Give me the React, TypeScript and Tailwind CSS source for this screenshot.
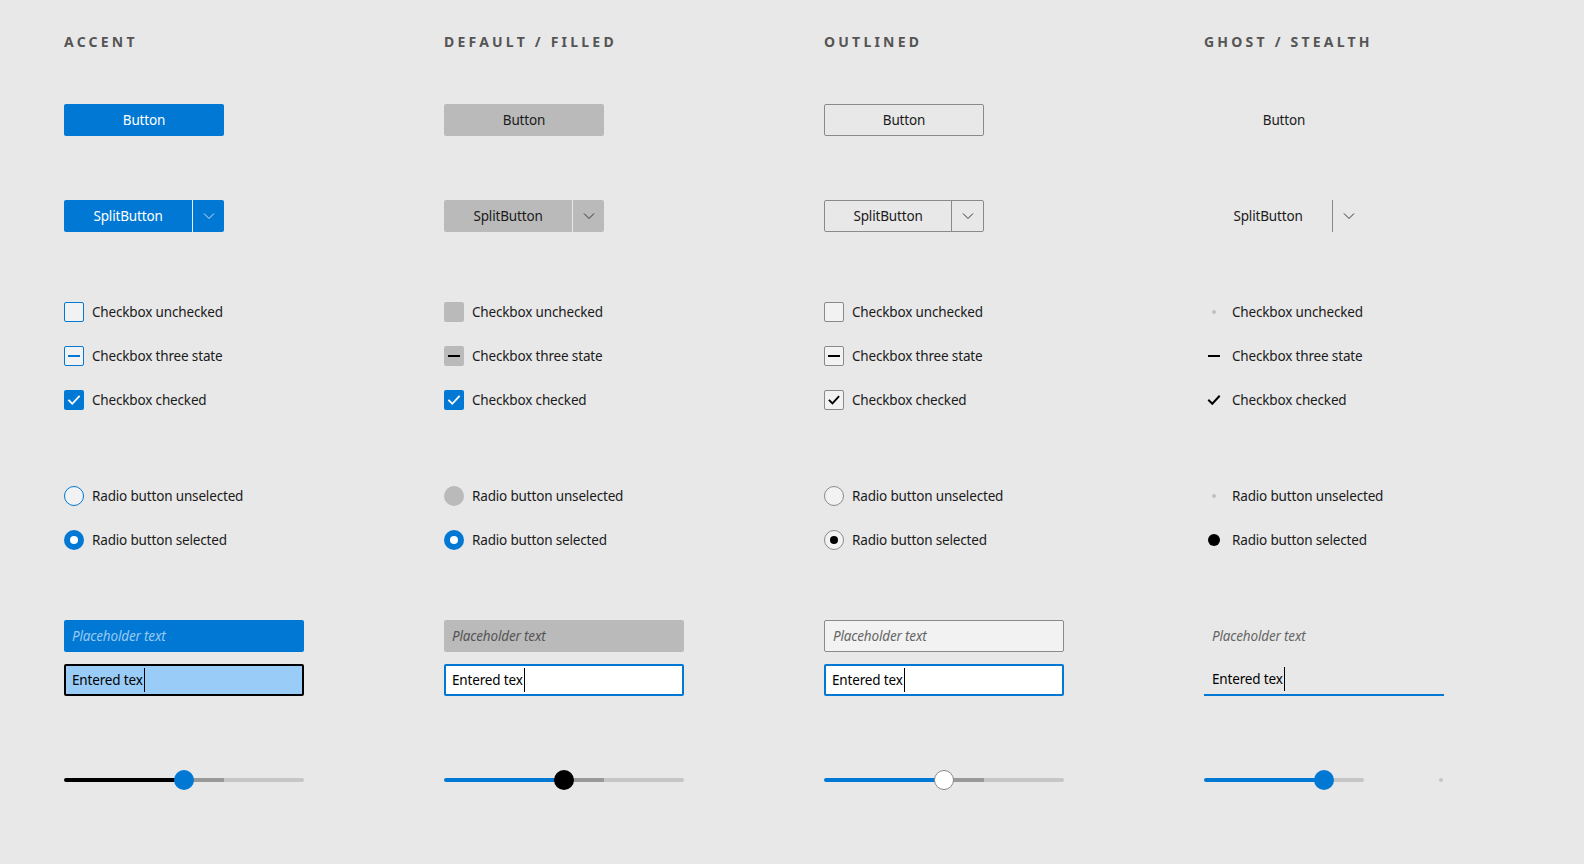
import React from "react";

type Variant = "accent" | "default" | "outlined" | "ghost";

const FONT = { fontFamily: '"Noto Sans", "Open Sans", sans-serif' } as const;

function Chevron({ color }: { color: string }) {
  return (
    <svg width="12" height="8" viewBox="0 0 12 8" fill="none">
      <path d="M1 1.5 L6 6.5 L11 1.5" stroke={color} strokeWidth="1" />
    </svg>
  );
}

function Check({ color, w = 1.8 }: { color: string; w?: number }) {
  return (
    <svg width="20" height="20" viewBox="0 0 20 20" fill="none">
      <path d="M5 10.5 L8.3 13.8 L15 6.5" stroke={color} strokeWidth={w} strokeLinecap="square" />
    </svg>
  );
}

const TXT = "text-[13.5px] tracking-[-0.012em]";

function PlainButton({ v }: { v: Variant }) {
  const cls = {
    accent: "bg-[#0078d4] text-white",
    default: "bg-[#bababa] text-[#1a1a1a]",
    outlined: "border border-[#8a8a8a] text-[#1a1a1a]",
    ghost: "text-[#1a1a1a]",
  }[v];
  return (
    <div className={`w-[160px] h-8 rounded-[2px] flex items-center justify-center ${TXT} ${cls}`}>
      Button
    </div>
  );
}

function SplitButton({ v }: { v: Variant }) {
  const wrap = {
    accent: "bg-[#0078d4] text-white",
    default: "bg-[#bababa] text-[#1a1a1a]",
    outlined: "border border-[#8a8a8a] text-[#1a1a1a]",
    ghost: "text-[#1a1a1a]",
  }[v];
  const divider = {
    accent: "bg-[#e6eef7]",
    default: "bg-[#e8e8e8]",
    outlined: "bg-[#8a8a8a]",
    ghost: "bg-[#8a8a8a]",
  }[v];
  const chev = v === "accent" ? "#cfe4f7" : "#333333";
  return (
    <div className={`w-[160px] h-8 rounded-[2px] flex items-stretch ${TXT} ${wrap}`}>
      <div className="flex-1 flex items-center justify-center">SplitButton</div>
      <div className={`w-px ${divider}`} />
      <div className="w-[31px] flex items-center justify-center">
        <Chevron color={chev} />
      </div>
    </div>
  );
}

function CheckBox({ v, state }: { v: Variant; state: "off" | "mixed" | "on" }) {
  if (v === "ghost") {
    return (
      <div className="w-5 h-5 flex items-center justify-center">
        {state === "off" && <div className="w-[4px] h-[4px] rounded-full bg-[#c0c0c0]" />}
        {state === "mixed" && <div className="w-3 h-[2px] bg-black" />}
        {state === "on" && <Check color="#000" w={2} />}
      </div>
    );
  }
  let box = "";
  let inner: React.ReactNode = null;
  if (v === "accent") {
    if (state === "on") {
      box = "bg-[#0078d4]";
      inner = <Check color="#fff" />;
    } else {
      box = "border border-[#0078d4] bg-[#f2f2f2]";
      if (state === "mixed") inner = <div className="w-3 h-[2px] bg-[#0078d4]" />;
    }
  } else if (v === "default") {
    if (state === "on") {
      box = "bg-[#0078d4]";
      inner = <Check color="#fff" />;
    } else {
      box = "bg-[#bababa]";
      if (state === "mixed") inner = <div className="w-3 h-[2px] bg-black" />;
    }
  } else {
    box = "border border-[#8a8a8a] bg-[#f2f2f2]";
    if (state === "mixed") inner = <div className="w-3 h-[2px] bg-black" />;
    if (state === "on") inner = <Check color="#000" w={2} />;
  }
  return (
    <div className={`w-5 h-5 rounded-[2px] flex items-center justify-center ${box}`}>{inner}</div>
  );
}

function Radio({ v, on }: { v: Variant; on: boolean }) {
  if (v === "ghost") {
    return (
      <div className="w-5 h-5 flex items-center justify-center">
        {on ? (
          <div className="w-3 h-3 rounded-full bg-black" />
        ) : (
          <div className="w-[4px] h-[4px] rounded-full bg-[#c0c0c0]" />
        )}
      </div>
    );
  }
  let box = "";
  let inner: React.ReactNode = null;
  if (v === "accent") {
    box = on ? "bg-[#0078d4]" : "border border-[#0078d4] bg-[#f2f2f2]";
    if (on) inner = <div className="w-2 h-2 rounded-full bg-white" />;
  } else if (v === "default") {
    box = on ? "bg-[#0078d4]" : "bg-[#bababa]";
    if (on) inner = <div className="w-2 h-2 rounded-full bg-white" />;
  } else {
    box = "border border-[#8a8a8a] bg-[#f2f2f2]";
    if (on) inner = <div className="w-2 h-2 rounded-full bg-black" />;
  }
  return <div className={`w-5 h-5 rounded-full flex items-center justify-center ${box}`}>{inner}</div>;
}

function Row({ children, label }: { children: React.ReactNode; label: string }) {
  return (
    <div className="flex items-center h-5 gap-2">
      {children}
      <span className={`${TXT} text-[#1a1a1a] leading-5`}>{label}</span>
    </div>
  );
}

function Placeholder({ v }: { v: Variant }) {
  const cls = {
    accent: "bg-[#0078d4] text-[#99c9f0]",
    default: "bg-[#bababa] text-[#555555]",
    outlined: "bg-[#f2f2f2] border border-[#8a8a8a] text-[#666666]",
    ghost: "text-[#666666]",
  }[v];
  return (
    <div className={`w-[240px] h-8 pt-px rounded-[2px] flex items-center px-2 ${TXT} italic ${cls}`}>
      Placeholder text
    </div>
  );
}

function Entered({ v }: { v: Variant }) {
  const cls = {
    accent: "bg-[#99ccf7] border-2 border-black rounded-[2px] px-[6px]",
    default: "bg-white border-2 border-[#0078d4] rounded-[2px] px-[6px]",
    outlined: "bg-white border-2 border-[#0078d4] rounded-[2px] px-[6px]",
    ghost: "border-b-2 border-[#0078d4] px-2",
  }[v];
  return (
    <div className={`w-[240px] h-8 flex items-center ${TXT} text-black ${cls}`}>
      <span className="pt-px">Entered tex</span>
      <span className="inline-block w-px h-6 bg-black ml-px" />
    </div>
  );
}

function Slider({ v }: { v: Variant }) {
  const fill = v === "accent" ? "bg-black" : "bg-[#0078d4]";
  const buffer = v === "ghost" ? "bg-[#c6c6c6]" : "bg-[#999999]";
  const rest = v === "ghost" ? "" : "bg-[#c6c6c6]";
  const thumb = {
    accent: "bg-[#0078d4]",
    default: "bg-black",
    outlined: "bg-white border border-[#8a8a8a]",
    ghost: "bg-[#0078d4]",
  }[v];
  return (
    <div className="relative w-[240px] h-5 flex items-center">
      <div className={`h-1 w-[120px] rounded-l-full ${fill}`} />
      <div className={`h-1 w-[40px] ${buffer} ${v === "ghost" ? "rounded-r-full" : ""}`} />
      <div className={`h-1 flex-1 rounded-r-full ${rest} flex items-center justify-end`}>
        {v === "ghost" && <div className="w-[4px] h-[4px] rounded-full bg-[#c6c6c6] mr-[1px]" />}
      </div>
      <div className={`absolute left-[110px] top-0 w-5 h-5 rounded-full ${thumb}`} />
    </div>
  );
}

function Column({ v, title }: { v: Variant; title: string }) {
  return (
    <div className="w-[380px] flex flex-col">
      <div className="h-5 leading-5 text-[14px] font-bold tracking-[0.23em] text-[#555555]">{title}</div>
      <div className="mt-[52px]">
        <PlainButton v={v} />
      </div>
      <div className="mt-16">
        <SplitButton v={v} />
      </div>
      <div className="mt-[70px] flex flex-col gap-6">
        <Row label="Checkbox unchecked">
          <CheckBox v={v} state="off" />
        </Row>
        <Row label="Checkbox three state">
          <CheckBox v={v} state="mixed" />
        </Row>
        <Row label="Checkbox checked">
          <CheckBox v={v} state="on" />
        </Row>
      </div>
      <div className="mt-[76px] flex flex-col gap-6">
        <Row label="Radio button unselected">
          <Radio v={v} on={false} />
        </Row>
        <Row label="Radio button selected">
          <Radio v={v} on={true} />
        </Row>
      </div>
      <div className="mt-[70px] flex flex-col gap-3">
        <Placeholder v={v} />
        <Entered v={v} />
      </div>
      <div className="mt-[74px]">
        <Slider v={v} />
      </div>
    </div>
  );
}

export default function App() {
  return (
    <div className="w-[1584px] h-[864px] bg-[#e8e8e8] pl-16 pt-8 flex" style={FONT}>
      <Column v="accent" title="ACCENT" />
      <Column v="default" title="DEFAULT / FILLED" />
      <Column v="outlined" title="OUTLINED" />
      <Column v="ghost" title="GHOST / STEALTH" />
    </div>
  );
}
